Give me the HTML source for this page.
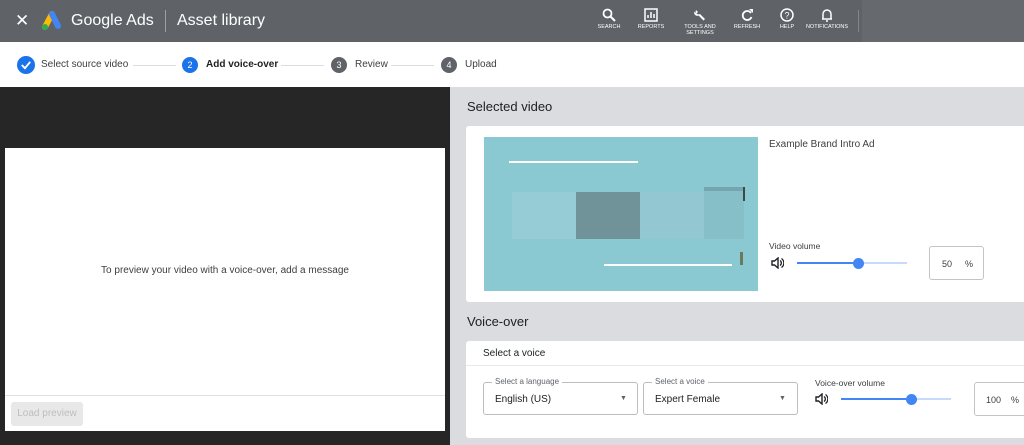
<!DOCTYPE html>
<html><head><style>
*{margin:0;padding:0;box-sizing:border-box}
body{width:1024px;height:445px;overflow:hidden;font-family:"Liberation Sans",Arial,sans-serif;background:#dadce0;position:relative;color:#3c4043}
.a{position:absolute}
.ic{position:absolute;top:8px;text-align:center;color:#fff;font-size:5.5px;line-height:6px;width:50px}
.ic svg{display:block;margin:0 auto 2px}
.step{position:absolute;top:59px;font-size:10px;color:#3c4043}
.num{position:absolute;top:57px;width:16px;height:16px;border-radius:50%;color:#fff;font-size:9px;text-align:center;line-height:16px}
.line{position:absolute;top:65px;height:1px;background:#dadce0}
</style></head><body>
<div class="a" style="left:0;top:0;width:1024px;height:42px;background:#5f6368"></div>
<div class="a" style="left:862px;top:0;width:162px;height:42px;background:#66696d"></div>
<div class="a" style="left:858px;top:10px;width:1px;height:22px;background:#80868b"></div>
<div class="a" style="left:15px;top:11px;color:#fff;font-size:17px">✕</div>
<svg class="a" style="left:41px;top:10px" width="22" height="20" viewBox="0 0 22 20"><path d="M4 17 L11 4" stroke="#fbbc04" stroke-width="6" stroke-linecap="round"/><path d="M11 4 L17 16" stroke="#4285f4" stroke-width="6" stroke-linecap="round"/><circle cx="4" cy="17" r="3" fill="#34a853"/></svg>
<div class="a" style="left:71px;top:12px;color:#fff;font-size:16px">Google Ads</div>
<div class="a" style="left:165px;top:10px;width:1px;height:22px;background:#9aa0a6"></div>
<div class="a" style="left:177px;top:12px;color:#fff;font-size:16px">Asset library</div>
<div class="ic" style="left:584px"><svg width="14" height="14" viewBox="0 0 14 14"><circle cx="5.5" cy="5.5" r="4" stroke="#fff" stroke-width="1.8" fill="none"/><path d="M8.5 8.5L13 13" stroke="#fff" stroke-width="2"/></svg>SEARCH</div>
<div class="ic" style="left:626px"><svg width="14" height="14" viewBox="0 0 14 14"><rect x="1" y="1" width="12" height="12" stroke="#fff" stroke-width="1.5" fill="none"/><path d="M4 10V7M7 10V4M10 10V6" stroke="#fff" stroke-width="1.5"/></svg>REPORTS</div>
<div class="ic" style="left:675px"><svg width="14" height="14" viewBox="0 0 14 14"><path d="M3 2a3 3 0 0 0 4 4l5 5-1.5 1.5-5-5a3 3 0 0 1-4-4l2 2 1.5-1.5z" fill="#fff"/></svg>TOOLS AND<br>SETTINGS</div>
<div class="ic" style="left:722px"><svg width="14" height="14" viewBox="0 0 14 14"><path d="M11 5A4.5 4.5 0 1 0 11.5 9" stroke="#fff" stroke-width="1.8" fill="none"/><path d="M9 1h4v4z" fill="#fff"/></svg>REFRESH</div>
<div class="ic" style="left:762px"><svg width="14" height="14" viewBox="0 0 14 14"><circle cx="7" cy="7" r="6" stroke="#fff" stroke-width="1.5" fill="none"/><text x="7" y="10.5" font-size="9" fill="#fff" text-anchor="middle" font-family="Liberation Sans">?</text></svg>HELP</div>
<div class="ic" style="left:802px"><svg width="14" height="14" viewBox="0 0 14 14"><path d="M3 11V6a4 4 0 0 1 8 0v5zM2 11h10M6 13h2" stroke="#fff" stroke-width="1.5" fill="none"/></svg>NOTIFICATIONS</div>
<div class="a" style="left:0;top:42px;width:1024px;height:45px;background:#fff"></div>
<svg class="a" style="left:17px;top:56px" width="18" height="18" viewBox="0 0 17 17"><circle cx="8.5" cy="8.5" r="8.5" fill="#1a73e8"/><path d="M4.5 8.5l3 3 5-6" stroke="#fff" stroke-width="1.8" fill="none"/></svg>
<div class="step" style="left:41px">Select source video</div>
<div class="line" style="left:133px;width:43px"></div>
<div class="num" style="left:182px;background:#1a73e8">2</div>
<div class="step" style="left:206px;font-weight:bold;color:#202124">Add voice-over</div>
<div class="line" style="left:281px;width:43px"></div>
<div class="num" style="left:331px;background:#5f6368">3</div>
<div class="step" style="left:355px">Review</div>
<div class="line" style="left:391px;width:43px"></div>
<div class="num" style="left:441px;background:#5f6368">4</div>
<div class="step" style="left:465px">Upload</div>
<div class="a" style="left:0;top:87px;width:450px;height:358px;background:#262626"></div>
<div class="a" style="left:5px;top:148px;width:440px;height:283px;background:#fff"></div>
<div class="a" style="left:5px;top:395px;width:440px;height:1px;background:#e0e0e0"></div>
<div class="a" style="left:5px;top:265px;width:440px;text-align:center;font-size:10px;color:#3c4043">To preview your video with a voice-over, add a message</div>
<div class="a" style="left:11px;top:402px;width:72px;height:24px;background:#e8e8e8;border-radius:3px;color:#bdbdbd;font-size:10px;line-height:24px;text-align:center">Load preview</div>
<div class="a" style="left:467px;top:99px;font-size:13px;color:#202124">Selected video</div>
<div class="a" style="left:466px;top:126px;width:560px;height:176px;background:#fff;border-radius:3px"></div>
<div class="a" style="left:484px;top:137px;width:274px;height:154px;background:#8ac8d2"></div>
<div class="a" style="left:509px;top:161px;width:129px;height:2px;background:#fff"></div>
<div class="a" style="left:512px;top:192px;width:64px;height:47px;background:#96ccd5"></div>
<div class="a" style="left:576px;top:192px;width:64px;height:47px;background:#6f9398"></div>
<div class="a" style="left:640px;top:192px;width:64px;height:47px;background:#93c8d2"></div>
<div class="a" style="left:704px;top:187px;width:40px;height:52px;background:#86bfc8;border-top:4px solid #75a6ad"></div>
<div class="a" style="left:743px;top:187px;width:2px;height:14px;background:#3a4a4c"></div>
<div class="a" style="left:604px;top:264px;width:128px;height:2px;background:#fff"></div>
<div class="a" style="left:740px;top:252px;width:3px;height:13px;background:#6b7a5a"></div>
<div class="a" style="left:769px;top:139px;font-size:10px;color:#3c4043">Example Brand Intro Ad</div>
<div class="a" style="left:769px;top:241px;font-size:8.5px;color:#3c4043">Video volume</div>
<svg class="a" style="left:771px;top:257px" width="13" height="12" viewBox="0 0 13 12"><path d="M1 4h2.5L7 1v10L3.5 8H1z" fill="none" stroke="#202124" stroke-width="1.4"/><path d="M9 3.5a3 3 0 0 1 0 5M10.5 1.5a5.5 5.5 0 0 1 0 9" fill="none" stroke="#202124" stroke-width="1.3"/></svg>
<div class="a" style="left:797px;top:262px;width:110px;height:2px;background:#c6dafc"></div>
<div class="a" style="left:797px;top:262px;width:61px;height:2px;background:#4285f4"></div>
<div class="a" style="left:853px;top:258px;width:11px;height:11px;border-radius:50%;background:#4285f4"></div>
<div class="a" style="left:929px;top:246px;width:55px;height:34px;border:1px solid #c4c4c4;border-radius:3px;font-size:9px;line-height:34px;color:#3c4043"><span style="margin-left:12px">50</span><span style="margin-left:13px">%</span></div>
<div class="a" style="left:467px;top:314px;font-size:13px;color:#202124">Voice-over</div>
<div class="a" style="left:466px;top:341px;width:560px;height:97px;background:#fff;border-radius:3px"></div>
<div class="a" style="left:466px;top:365px;width:560px;height:1px;background:#e8e8e8"></div>
<div class="a" style="left:483px;top:348px;font-size:10px;color:#202124">Select a voice</div>
<div class="a" style="left:483px;top:382px;width:155px;height:33px;border:1px solid #bdbdbd;border-radius:3px"></div>
<div class="a" style="left:492px;top:377px;background:#fff;padding:0 3px;font-size:8px;color:#5f6368">Select a language</div>
<div class="a" style="left:495px;top:394px;font-size:10px;color:#202124">English (US)</div>
<div class="a" style="left:620px;top:395px;font-size:7px;color:#5f6368">▼</div>
<div class="a" style="left:643px;top:382px;width:155px;height:33px;border:1px solid #bdbdbd;border-radius:3px"></div>
<div class="a" style="left:652px;top:377px;background:#fff;padding:0 3px;font-size:8px;color:#5f6368">Select a voice</div>
<div class="a" style="left:655px;top:394px;font-size:10px;color:#202124">Expert Female</div>
<div class="a" style="left:779px;top:395px;font-size:7px;color:#5f6368">▼</div>
<div class="a" style="left:815px;top:378px;font-size:8.5px;color:#3c4043">Voice-over volume</div>
<svg class="a" style="left:815px;top:393px" width="13" height="12" viewBox="0 0 13 12"><path d="M1 4h2.5L7 1v10L3.5 8H1z" fill="none" stroke="#202124" stroke-width="1.4"/><path d="M9 3.5a3 3 0 0 1 0 5M10.5 1.5a5.5 5.5 0 0 1 0 9" fill="none" stroke="#202124" stroke-width="1.3"/></svg>
<div class="a" style="left:841px;top:398px;width:110px;height:2px;background:#c6dafc"></div>
<div class="a" style="left:841px;top:398px;width:71px;height:2px;background:#4285f4"></div>
<div class="a" style="left:906px;top:394px;width:11px;height:11px;border-radius:50%;background:#4285f4"></div>
<div class="a" style="left:974px;top:382px;width:60px;height:34px;border:1px solid #c4c4c4;border-radius:3px;font-size:9px;line-height:34px;color:#3c4043"><span style="margin-left:11px">100</span><span style="margin-left:10px">%</span></div>
</body></html>
